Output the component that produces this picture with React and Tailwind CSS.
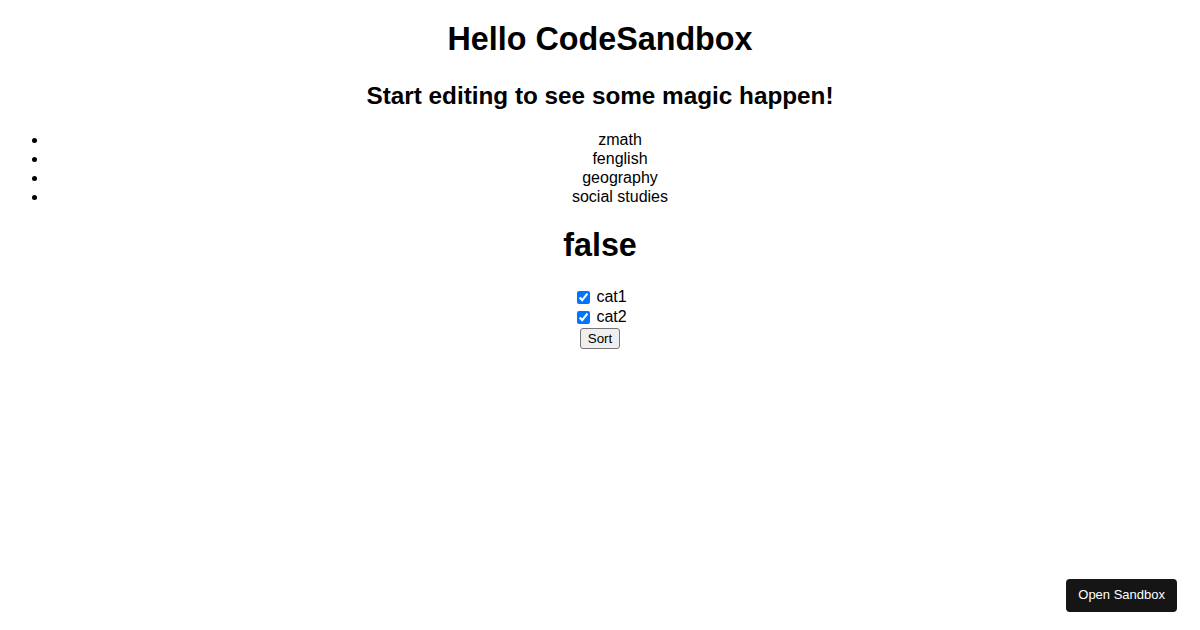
import { useState } from 'react';

const subjects = ['zmath', 'fenglish', 'geography', 'social studies'];

export default function App() {
  const [cats, setCats] = useState({ cat1: true, cat2: true });

  return (
    <div className="min-h-[630px] bg-white px-2 text-center text-black font-['Liberation_Sans',Arial,sans-serif] leading-[normal]">
      <h1 className="mt-[21px] mb-[24px] text-[32.3px] font-bold leading-[37px]">Hello CodeSandbox</h1>
      <h2 className="mb-[20px] text-[24.3px] font-bold leading-[normal]">Start editing to see some magic happen!</h2>
      <ul className="list-disc pl-10 text-[16px]">
        {subjects.map((s) => (
          <li key={s} className="leading-[19px]">{s}</li>
        ))}
      </ul>
      <h1 className="mt-[21px] mb-[23px] text-[32.3px] font-bold leading-[37px]">false</h1>
      <div className="flex flex-col items-center">
        {Object.keys(cats).map((c) => (
          <label key={c} className="flex h-5 items-center text-[16px]">
            <input
              type="checkbox"
              checked={cats[c]}
              onChange={() => setCats({ ...cats, [c]: !cats[c] })}
              className="ml-1 mr-[3px] my-[3px] h-[13px] w-[13px] accent-[#0075ff]"
            />
            <span className="ml-[3px]">{c}</span>
          </label>
        ))}
        <button className="mt-[1px] rounded-[3px] border border-[#767676] bg-[#efefef] px-[7px] py-[2px] text-[13.33px] leading-[normal]">
          Sort
        </button>
      </div>
      <button className="fixed bottom-[18px] right-[23px] rounded-[4px] bg-[#151515] px-3 pt-[8px] pb-[10px] text-[13px] text-white font-['Liberation_Sans',Arial,sans-serif]">
        Open Sandbox
      </button>
    </div>
  );
}
